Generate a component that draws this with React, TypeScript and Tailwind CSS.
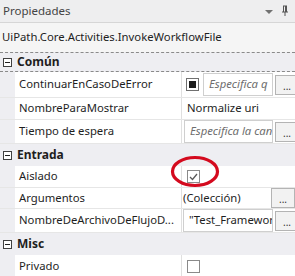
import React from "react";

const font = { fontFamily: '"Segoe UI", "Noto Sans", "Open Sans", sans-serif' };

function Minus() {
  return (
    <div className="w-[9px] h-[9px] border border-[#404040] flex items-center justify-center bg-white">
      <div className="w-[5px] h-px bg-[#202020]" />
    </div>
  );
}

function Category({ title, dashed }: { title: string; dashed?: boolean }) {
  return (
    <div
      className={`flex items-center bg-[#eeeef2] pl-[3px] gap-[5px] ${
        dashed ? "h-[20px] border-y border-dashed border-[#8a8a8a]" : "h-[22px]"
      }`}
    >
      <Minus />
      <span className="text-[12px] font-bold text-[#1e1e1e]">{title}</span>
    </div>
  );
}

function Row({ name, h, children }: { name: string; h: string; children?: React.ReactNode }) {
  return (
    <div className={`flex ${h} border-b border-[#e6e6e6]`}>
      <div className="w-[15px] bg-[#eeeef2] shrink-0" />
      <div className="w-[167px] shrink-0 flex items-center pl-[4px] text-[11.3px] text-[#1e1e1e] overflow-hidden whitespace-nowrap border-r border-[#e0e0e0] bg-white">
        {name}
      </div>
      <div className="flex-1 flex items-center bg-white relative min-w-0">{children}</div>
    </div>
  );
}

function TextBox({ text, italic, w }: { text: string; italic?: boolean; w: string }) {
  return (
    <div
      className={`${w} h-[23px] border border-[#cfcfcf] bg-white flex items-center px-[5px] overflow-hidden whitespace-nowrap text-[11.3px] ${
        italic ? "italic text-[#6d6d6d]" : "text-[#1e1e1e]"
      }`}
    >
      {text}
    </div>
  );
}

function Dots() {
  return (
    <div className="ml-[2px] w-[24px] h-[20px] border border-[#b4b4b4] bg-[#f2f2f2] flex items-end justify-center pb-[3px] text-[10px] leading-none text-[#333] shrink-0">
      ...
    </div>
  );
}

export default function App() {
  return (
    <div className="w-[295px] h-[276px] overflow-hidden bg-[#f5f5f5] relative" style={font}>
      {/* Title */}
      <div className="h-[23px] flex items-center bg-[#eeeeef] border-b border-[#d6d6d6] pl-[3px] pr-[6px]">
        <span className="text-[11.5px] text-[#444]">Propiedades</span>
        <div
          className="flex-1 mx-[8px] h-[4px]"
          style={{
            backgroundImage: "radial-gradient(#b8b8b8 0.6px, transparent 0.7px)",
            backgroundSize: "2px 2px",
          }}
        />
        <svg width="8" height="6" viewBox="0 0 8 6" className="mr-[8px] mt-[2px]">
          <path d="M0 1 L8 1 L4 5 Z" fill="#717171" />
        </svg>
        <svg width="8" height="12" viewBox="0 0 8 12">
          <path d="M2 1 H6 M2.5 1 V7 M5.5 1 V7 M1 7 H7 M4 7 V11" stroke="#555" strokeWidth="1" fill="none" />
          <rect x="4" y="1" width="1.5" height="6" fill="#555" />
        </svg>
      </div>
      {/* Description */}
      <div className="h-[29px] flex items-center pl-[2px] bg-[#f5f5f5] text-[11.3px] text-[#1e1e1e]">
        UiPath.Core.Activities.InvokeWorkflowFile
      </div>
      <Category title="Común" dashed />
      <Row name="ContinuarEnCasoDeError" h="h-[26px]">
        <div className="ml-[4px] w-[13px] h-[13px] border border-[#707070] bg-white flex items-center justify-center shrink-0">
          <div className="w-[7px] h-[7px] bg-[#1e1e1e]" />
        </div>
        <div className="ml-[4px]">
          <TextBox text="Especifica q" italic w="w-[70px]" />
        </div>
        <Dots />
      </Row>
      <Row name="NombreParaMostrar" h="h-[22px]">
        <span className="pl-[5px] text-[11.3px] text-[#1e1e1e] whitespace-nowrap">Normalize uri</span>
      </Row>
      <Row name="Tiempo de espera" h="h-[24px]">
        <div className="ml-[2px]">
          <TextBox text="Especifica la cantidad" italic w="w-[89px]" />
        </div>
        <Dots />
      </Row>
      <Category title="Entrada" />
      <Row name="Aislado" h="h-[22px]">
        <div className="ml-[5px] w-[13px] h-[13px] border border-[#8a8a8a] bg-white flex items-center justify-center">
          <svg width="9" height="8" viewBox="0 0 9 8">
            <path d="M1 4 L3.5 6.5 L8 1" stroke="#5a5a5a" strokeWidth="1.3" fill="none" />
          </svg>
        </div>
      </Row>
      <Row name="Argumentos" h="h-[21px]">
        <span className="pl-[1px] text-[11.3px] text-[#1e1e1e] whitespace-nowrap flex-1">(Colección)</span>
        <Dots />
      </Row>
      <Row name="NombreDeArchivoDeFlujoD..." h="h-[24px]">
        <div className="ml-[1px]">
          <TextBox text={'"Test_Framework\\Init.xaml"'} w="w-[90px]" />
        </div>
        <Dots />
      </Row>
      <Category title="Misc" />
      <Row name="Privado" h="h-[24px]">
        <div className="ml-[5px] w-[13px] h-[13px] border border-[#8a8a8a] bg-white" />
      </Row>
      {/* Red highlight ellipse */}
      <svg className="absolute left-[170px] top-[155px]" width="50" height="33" viewBox="0 0 50 33">
        <ellipse cx="25" cy="16.5" rx="22.5" ry="14" stroke="#d40a1e" strokeWidth="3.2" fill="none" />
      </svg>
    </div>
  );
}
